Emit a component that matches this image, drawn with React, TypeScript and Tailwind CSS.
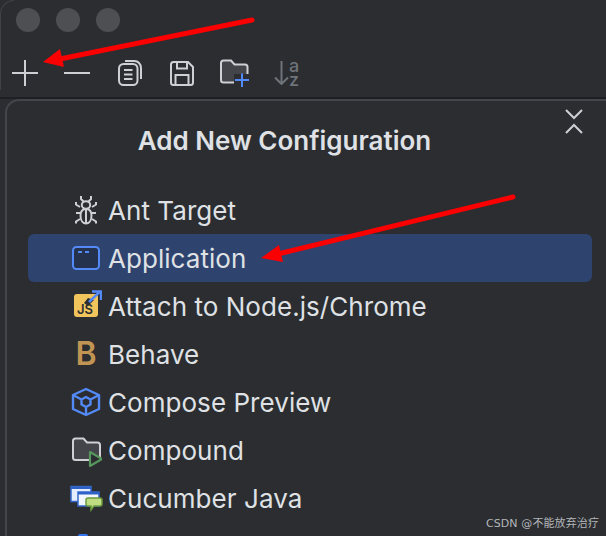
const F = "font-['Inter','Noto_Sans_CJK_SC',sans-serif]";

function Ant() {
  return (
    <svg width="22" height="30" viewBox="0 0 22 30" fill="none" stroke="#ced0d6" strokeWidth="2">
      <path d="M6 1v3l2.500 2.500M16 1v3l-2.500 2.500" />
      <ellipse cx="11" cy="10" rx="4.200" ry="3.800" />
      <path d="M1 7v2.500l4 2.500M21 7v2.500l-4 2.500M1 18h4.500M21 18h-4.500M1 28.500v-2l4-2.500M21 28.500v-2l-4-2.500" />
      <path d="M11 14c-3.500 0-5.500 2.500-5.500 6.500 0 5 2.500 8 5.500 8s5.500-3 5.500-8c0-4-2-6.500-5.500-6.500zM11 14v14" />
    </svg>
  );
}
function AppIcon() {
  return (
    <svg width="28" height="24" viewBox="0 0 28 24" fill="none">
      <rect x="1" y="1" width="26" height="22" rx="3.500" fill="#25324d" stroke="#548af7" strokeWidth="2" />
      <path d="M6 6h4M13 6h4" stroke="#548af7" strokeWidth="2" />
    </svg>
  );
}
function JsIcon() {
  return (
    <svg width="32" height="32" viewBox="0 0 32 32" fill="none">
      <rect x="4" y="4" width="24" height="23" rx="3" fill="#f2c55c" />
      <path d="M18 8 14 13l4 3 6-6z" fill="#2b2d30" />
      <path d="M19 12 30 1.500M22 1.500h9V10" stroke="#548af7" strokeWidth="2.500" />
      <text x="7" y="23.500" fontFamily="Inter, sans-serif" fontWeight="600" fontSize="13" fill="#2b2d30">JS</text>
    </svg>
  );
}
function Cube() {
  return (
    <svg width="30" height="30" viewBox="0 0 30 30" fill="none" stroke="#548af7" strokeWidth="2.400" strokeLinejoin="round">
      <path d="M15 2 28 8v14l-13 6-13-6V8z" />
      <path d="M2 8l8.500 4.500M28 8l-8.500 4.500M15 28v-8M15 10l4.500 2.500v5L15 20l-4.500-2.500v-5z" />
    </svg>
  );
}
function FolderRun() {
  return (
    <svg width="32" height="34" viewBox="0 0 32 34" fill="none">
      <path d="M3 8c0-1.500 1-2.500 2.500-2.500h8l3.500 4h10.500c1.500 0 2.500 1 2.500 2.500v12.500c0 1.500-1 2.500-2.500 2.500h-22C4 27 3 26 3 24.500z" fill="#43454a" stroke="#ced0d6" strokeWidth="2" />
      <path d="M20 19 32 26 20 33z" fill="#2b2d30" stroke="#57965c" strokeWidth="2.200" strokeLinejoin="round" />
    </svg>
  );
}
function Cucumber() {
  return (
    <svg width="34" height="28" viewBox="0 0 34 28" fill="none">
      <rect x="2" y="2.500" width="20" height="15" fill="#e4ecff" stroke="#3468cc" strokeWidth="1.500" />
      <rect x="2" y="2.500" width="20" height="2.500" fill="#2f62c8" />
      <rect x="9" y="8" width="21" height="14" fill="#f2f6ff" stroke="#3468cc" strokeWidth="1.500" />
      <rect x="9" y="8" width="21" height="2.500" fill="#2f62c8" />
      <path d="M19 14h12c1.300 0 2 .7 2 2v4c0 1.300-.7 2-2 2h-6l-3 4v-4h-3c-1.300 0-2-.7-2-2v-4c0-1.300.7-2 2-2z" fill="#c1dd84" stroke="#6a9a3c" strokeWidth="1.500" />
    </svg>
  );
}

const rows = [
  { label: "Ant Target", icon: <Ant /> },
  { label: "Application", icon: <AppIcon />, active: true },
  { label: "Attach to Node.js/Chrome", icon: <JsIcon /> },
  {
    label: "Behave",
    icon: <span className={`text-[32px] font-semibold leading-none text-[#c09553] ${F}`}>B</span>,
  },
  { label: "Compose Preview", icon: <Cube /> },
  { label: "Compound", icon: <FolderRun /> },
  { label: "Cucumber Java", icon: <Cucumber /> },
];

export default function App() {
  return (
    <div className={`relative flex h-[536px] w-[606px] flex-col overflow-hidden bg-[#2b2d30] ${F}`}>
      <div className="flex gap-[16px] pl-[16px] pt-[8px]">
        <span className="size-[24px] rounded-full bg-[#4e4f52]" />
        <span className="size-[24px] rounded-full bg-[#4e4f52]" />
        <span className="size-[24px] rounded-full bg-[#4e4f52]" />
      </div>

      <div className="mt-[23px] flex h-[36px] items-center pl-[12px]">
        <svg width="26" height="26" viewBox="0 0 26 26" stroke="#ced0d6" strokeWidth="2">
          <path d="M13 0v26M0 13h26" />
        </svg>
        <svg className="ml-[26px]" width="26" height="26" viewBox="0 0 26 26" stroke="#ced0d6" strokeWidth="2">
          <path d="M0 13h26" />
        </svg>
        <svg className="ml-[28px]" width="24" height="26" viewBox="0 0 24 26" fill="none" stroke="#ced0d6" strokeWidth="2">
          <rect x="1" y="4" width="18.500" height="21" rx="4.500" />
          <path d="M7 1h9.500C20 1 23 4 23 8v11" />
          <path d="M6 10h8.500M6 14.500h8.500M6 19h8.500" />
        </svg>
        <svg className="ml-[28px]" width="24" height="25" viewBox="0 0 24 25" fill="none" stroke="#ced0d6" strokeWidth="2">
          <path d="M1 3.500C1 2 2 1 3.500 1H18l5 5v15.500c0 1.500-1 2.500-2.500 2.500h-17C2 24 1 23 1 21.500z" />
          <path d="M7 1v6.500h10V1M5.500 24v-10h13v10" />
        </svg>
        <svg className="ml-[26px]" width="30" height="28" viewBox="0 0 30 28" fill="none">
          <path d="M1 4c0-1.500 1-2.500 2.500-2.500h7.500l3.500 4H25c1.500 0 2.500 1 2.500 2.500v13c0 1.500-1 2.500-2.500 2.500H3.500C2 23.500 1 22.500 1 21z" fill="#43454a" stroke="#ced0d6" strokeWidth="2" />
          <rect x="14" y="15" width="16" height="13" fill="#2b2d30" />
          <path d="M22 14.500v13.500M15 21h14" stroke="#548af7" strokeWidth="2" />
        </svg>
        <div className="ml-[24px] flex h-[26px] items-center">
          <svg width="15" height="24" viewBox="0 0 15 24" fill="none" stroke="#6f737a" strokeWidth="2">
            <path d="M7.500 0v23M1 16.500l6.500 6.500 6.500-6.500" />
          </svg>
          <span className="text-[18px] font-medium leading-[14px] text-[#6f737a]">
            a
            <br />z
          </span>
        </div>
      </div>

      <div className="mt-[6px] h-[2px] bg-[#1e1f22]" />

      <div className="relative ml-[5px] flex-1 rounded-tl-[14px] border-l-2 border-t-2 border-[#43454a] pt-[25px]">
        <h1 className="pr-[44px] text-center text-[26px] font-semibold leading-[30px] text-[#dfe1e5]">
          Add New Configuration
        </h1>
        <svg className="absolute right-[23px] top-[8px]" width="18" height="26" viewBox="0 0 18 26" fill="none" stroke="#ced0d6" strokeWidth="2">
          <path d="M1 1l8 8 8-8M1 24l8-8 8 8" />
        </svg>

        <ul className="mt-[30px] flex flex-col pl-[21px] pr-[14px]">
          {rows.map((r) => (
            <li
              key={r.label}
              className={`flex h-[48px] items-center rounded-[6px] ${r.active ? "bg-[#2e436e]" : ""}`}
            >
              <span className="flex w-[80px] shrink-0 items-center justify-center pl-[36px]">
                {r.icon}
              </span>
              <span className="pt-[2px] text-[26px] leading-none tracking-[0.05px] text-[#dfe1e5]">{r.label}</span>
            </li>
          ))}
        </ul>
      </div>

      <span className="absolute left-0 top-0 h-[90px] w-[14px] rounded-tl-[14px] border-l border-t border-[#404246]" />
      <svg className="absolute left-0 top-0" width="606" height="536" viewBox="0 0 606 536" fill="none" pointerEvents="none">
        <path d="M252 20 60 59" stroke="#fa0000" strokeWidth="5" strokeLinecap="round" />
        <path d="M43 62 60 49 64 67z" fill="#fa0000" />
        <path d="M513 197 278 254" stroke="#fa0000" strokeWidth="5" strokeLinecap="round" />
        <path d="M261 258 279 245 283 262z" fill="#fa0000" />
      </svg>
      <span className="absolute bottom-[5px] right-[7px] font-['DejaVu_Sans','Noto_Sans_CJK_SC',sans-serif] text-[11px] leading-[14px] tracking-[0.1px] text-[#b4b6ba]">
        CSDN @不能放弃治疗
      </span>
      <span className="absolute bottom-0 left-[78px] h-[2px] w-[10px] rounded-t-full bg-[#3574f0]" />
    </div>
  );
}
